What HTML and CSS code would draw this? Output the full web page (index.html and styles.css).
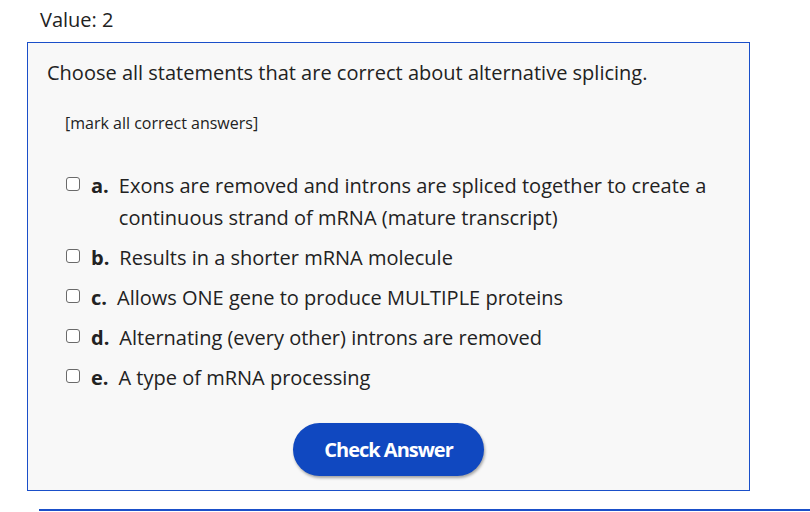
FILE: index.html
```html
<!DOCTYPE html>
<html>
<head>
<meta charset="utf-8">
<link rel="stylesheet" href="styles.css">
</head>
<body>
<div class="value">Value: 2</div>
<div class="card">
  <p class="question">Choose all statements that are correct about alternative splicing.</p>
  <p class="hint">[mark all correct answers]</p>
  <ul class="options">
    <li class="opt"><span class="box"></span><span class="letter">a.</span><span class="text">Exons are removed and introns are spliced together to create a continuous strand of mRNA (mature transcript)</span></li>
    <li class="opt"><span class="box"></span><span class="letter">b.</span><span class="text">Results in a shorter mRNA molecule</span></li>
    <li class="opt"><span class="box"></span><span class="letter">c.</span><span class="text">Allows ONE gene to produce MULTIPLE proteins</span></li>
    <li class="opt"><span class="box"></span><span class="letter">d.</span><span class="text">Alternating (every other) introns are removed</span></li>
    <li class="opt"><span class="box"></span><span class="letter">e.</span><span class="text">A type of mRNA processing</span></li>
  </ul>
  <div class="actions"><button class="check">Check Answer</button></div>
</div>
<div class="rule"></div>
</body>
</html>
```
FILE: styles.css
```css
html, body { margin: 0; padding: 0; background: #fff; }
body { font-family: "Open Sans", "Noto Sans", sans-serif; color: #222; width: 810px; height: 512px; overflow: hidden; }
.value { padding: 7px 0 0 40px; font-size: 20px; line-height: 26px; height: 34px; box-sizing: border-box; color: #222; }
.card { margin: 8px 0 0 27px; width: 723px; height: 449px; box-sizing: border-box; border: 1px solid #1a4fc9; background: #f8f8f8; padding: 17px 0 0 19px; }
.question { margin: 0; font-size: 20px; line-height: 26px; color: #222; }
.hint { margin: 26px 0 0 18px; font-size: 16px; line-height: 22px; color: #222; }
.options { list-style: none; margin: 36px 0 0 19px; padding: 0; }
.opt { display: flex; align-items: flex-start; font-size: 20px; line-height: 32px; color: #222; margin-bottom: 8px; }
.box { flex: none; width: 14px; height: 14px; box-sizing: border-box; border: 1.5px solid #6a6a6a; border-radius: 3px; background: #fff; margin-top: 7px; margin-right: 11px; }
.letter { flex: none; font-weight: 700; margin-right: 10px; }
.text { width: 600px; }
.actions { display: flex; padding-left: 246px; margin-top: 29px; }
.check { width: 191px; height: 53px; border: none; border-radius: 27px; background: #1048c0; color: #fff; font-family: "Open Sans", sans-serif; font-weight: 700; font-size: 20px; letter-spacing: -1px; box-shadow: 1px 2px 3px rgba(0,0,0,0.35); }
.rule { margin: 18px 0 0 39px; height: 2px; background: #1a4fc9; }
```
